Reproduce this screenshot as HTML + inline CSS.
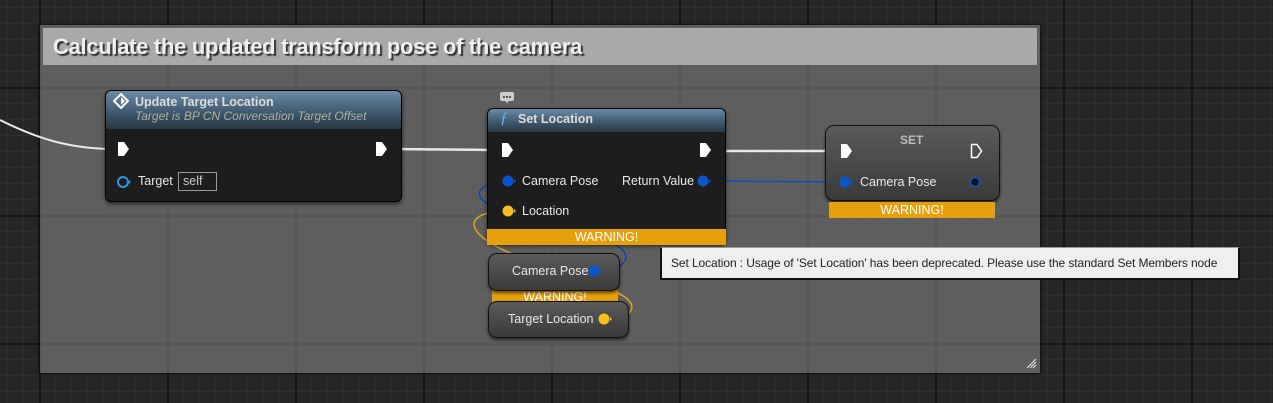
<!DOCTYPE html>
<html><head><meta charset="utf-8"><style>
*{margin:0;padding:0;box-sizing:border-box}
body{width:1273px;height:403px;overflow:hidden;position:relative;font-family:"Liberation Sans",sans-serif;
background-color:#262626;
background-image:linear-gradient(90deg,#161616 2px,transparent 2px),linear-gradient(#161616 2px,transparent 2px),linear-gradient(90deg,#2e2e2e 1px,transparent 1px),linear-gradient(#2e2e2e 1px,transparent 1px);
background-size:128px 128px,128px 128px,16px 16px,16px 16px;background-position:39px 87px,39px 87px,7px 7px,7px 7px}
.a{position:absolute}
.comment{left:40px;top:25px;width:1000px;height:348px;background:rgba(140,140,140,.55);box-shadow:0 0 4px #000}
.chead{left:43px;top:28px;width:994px;height:37px;background:#a9a9a9;color:#eee;font-weight:bold;font-size:22px;letter-spacing:-0.3px;padding:6px 0 0 10px;text-shadow:2px 2px 1px #333}
.node{background:#1c1d1c;border:1px solid #000;border-radius:6px;box-shadow:0 2px 4px rgba(0,0,0,.6);overflow:hidden}
.nh{height:36px;background:linear-gradient(180deg,#6b8ba6,#3c566b 60%,#2a3742);color:#ddd;font-weight:bold;font-size:12.5px;padding:4px 0 0 28px}
.t{color:#e8e8e8;font-size:12.5px;position:absolute;white-space:nowrap}
.warn{background:#e6a00e;color:#fff;font-size:12.5px;text-align:center;height:16px;line-height:16px;position:absolute}
.var{background:linear-gradient(180deg,#5a5a5a,#3a3a3a);border:1px solid #111;border-radius:9px;box-shadow:0 2px 3px rgba(0,0,0,.6)}
.tip{left:660px;top:247px;width:580px;height:33px;background:#efefef;border:2px solid #111;border-top:1px solid #999;font-size:12px;color:#222;padding:8px 0 0 9px;white-space:nowrap;letter-spacing:-0.1px}
</style></head><body>
<div class="a comment"></div>
<div class="a chead">Calculate the updated transform pose of the camera</div>
<svg class="a" style="left:1025px;top:357px" width="12" height="12"><path d="M2 11L11 2M5 11L11 5M8 11L11 8" stroke="#ddd" stroke-width="1.2"/></svg>

<svg class="a" style="left:0;top:0" width="1273" height="403">
<path d="M0 120 C40 140,70 148,110 149" stroke="#e8e8e8" stroke-width="2" fill="none"/>
<path d="M390 149 L500 150" stroke="#e8e8e8" stroke-width="2.5" fill="none"/>
<path d="M715 151 L845 151" stroke="#e8e8e8" stroke-width="2.5" fill="none"/>
<path d="M705 181 L845 182" stroke="#0a50c0" stroke-width="1.5" fill="none"/>
<path d="M597 271 C640 268,630 245,600 240 C560 230,520 220,490 205 C470 195,480 183,505 181" stroke="#0a45b0" stroke-width="1.5" fill="none"/>
<path d="M605 319 C640 318,640 300,610 290 C560 270,500 255,480 235 C465 220,480 212,505 211" stroke="#d8a820" stroke-width="1.5" fill="none"/>
</svg>

<div class="a node" style="left:105px;top:90px;width:297px;height:112px">
<div class="nh" style="height:38px;padding-left:29px">Update Target Location<br><i style="font-weight:normal;color:#b0b09a;font-size:12px">Target is BP CN Conversation Target Offset</i></div>
</div>
<svg class="a" style="left:113px;top:93px" width="16" height="16"><path d="M8 1L15 8L8 15L1 8Z" fill="none" stroke="#fff" stroke-width="2"/><path d="M8 4L12 8L8 12" fill="#fff"/></svg>
<svg class="a" style="left:117px;top:141px" width="14" height="16"><path d="M1 1H7L12 8L7 15H1Z" fill="#fff"/></svg>
<svg class="a" style="left:375px;top:141px" width="14" height="16"><path d="M1 1H7L12 8L7 15H1Z" fill="#fff"/></svg>
<svg class="a" style="left:116px;top:175px" width="16" height="14"><circle cx="7" cy="7" r="5" fill="none" stroke="#2a9ae0" stroke-width="2"/><path d="M13 5L15 7L13 9Z" fill="#2a9ae0"/></svg>
<div class="t" style="left:138px;top:174px">Target</div>
<div class="a" style="left:178px;top:172px;width:39px;height:19px;border:1px solid #999;color:#ccc;font-size:12.5px;padding:1px 0 0 4px">self</div>

<svg class="a" style="left:499px;top:91px" width="16" height="13"><rect x="1" y="1" width="14" height="9" rx="2" fill="#ccc"/><path d="M6 10L8 12L10 10" fill="#ccc"/><circle cx="5" cy="6" r="1" fill="#333"/><circle cx="8" cy="6" r="1" fill="#333"/><circle cx="11" cy="6" r="1" fill="#333"/></svg>
<div class="a node" style="left:487px;top:108px;width:239px;height:136px;background:#1c1d1c">
<div class="nh" style="height:23px;padding:3px 0 0 30px">Set Location</div>
</div>
<div class="a" style="left:500px;top:110px;color:#6ab0ff;font-style:italic;font-family:'Liberation Serif',serif;font-size:16px">ƒ</div>
<svg class="a" style="left:501px;top:142px" width="14" height="16"><path d="M1 1H7L12 8L7 15H1Z" fill="#fff"/></svg>
<svg class="a" style="left:699px;top:142px" width="14" height="16"><path d="M1 1H7L12 8L7 15H1Z" fill="#fff"/></svg>
<svg class="a" style="left:501px;top:174px" width="16" height="14"><circle cx="7" cy="7" r="5.5" fill="#0a55cc"/><path d="M13 5L15 7L13 9Z" fill="#0a55cc"/></svg>
<div class="t" style="left:522px;top:174px">Camera Pose</div>
<div class="t" style="left:622px;top:174px">Return Value</div>
<svg class="a" style="left:696px;top:174px" width="16" height="14"><circle cx="7" cy="7" r="5.5" fill="#0a55cc"/><path d="M13 5L15 7L13 9Z" fill="#0a55cc"/></svg>
<svg class="a" style="left:501px;top:204px" width="16" height="14"><circle cx="7" cy="7" r="5.5" fill="#f5c020"/><path d="M13 5L15 7L13 9Z" fill="#f5c020"/></svg>
<div class="t" style="left:522px;top:204px">Location</div>
<div class="warn" style="left:487px;top:229px;width:239px">WARNING!</div>

<div class="a var" style="left:825px;top:125px;width:175px;height:76px"></div>
<div class="a" style="left:900px;top:133px;color:#bbb;font-weight:bold;font-size:12px">SET</div>
<svg class="a" style="left:840px;top:143px" width="14" height="16"><path d="M1 1H7L12 8L7 15H1Z" fill="#fff"/></svg>
<svg class="a" style="left:970px;top:143px" width="14" height="16"><path d="M1.5 1.5H7L11.5 8L7 14.5H1.5Z" fill="none" stroke="#fff" stroke-width="1.5"/></svg>
<svg class="a" style="left:838px;top:175px" width="16" height="14"><circle cx="7" cy="7" r="5.5" fill="#0a55cc"/><path d="M13 5L15 7L13 9Z" fill="#0a55cc"/></svg>
<div class="t" style="left:860px;top:175px">Camera Pose</div>
<svg class="a" style="left:968px;top:175px" width="16" height="14"><circle cx="7" cy="7" r="4.5" fill="#111" stroke="#0a55cc" stroke-width="1.5"/><path d="M13 5L15 7L13 9Z" fill="#0a55cc"/></svg>
<div class="warn" style="left:829px;top:202px;width:166px">WARNING!</div>

<div class="warn" style="left:492px;top:290px;width:126px;height:14px;line-height:14px">WARNING!</div>
<div class="a var" style="left:488px;top:253px;width:132px;height:38px"></div>
<div class="t" style="left:512px;top:264px">Camera Pose</div>
<svg class="a" style="left:587px;top:264px" width="16" height="14"><circle cx="7" cy="7" r="5.5" fill="#0a55cc"/><path d="M13 5L15 7L13 9Z" fill="#0a55cc"/></svg>
<div class="a var" style="left:488px;top:301px;width:141px;height:37px"></div>
<div class="t" style="left:508px;top:312px">Target Location</div>
<svg class="a" style="left:597px;top:312px" width="16" height="14"><circle cx="7" cy="7" r="5.5" fill="#f5c020"/><path d="M13 5L15 7L13 9Z" fill="#f5c020"/></svg>

<div class="a tip">Set Location : Usage of 'Set Location' has been deprecated. Please use the standard Set Members node</div>
</body></html>
